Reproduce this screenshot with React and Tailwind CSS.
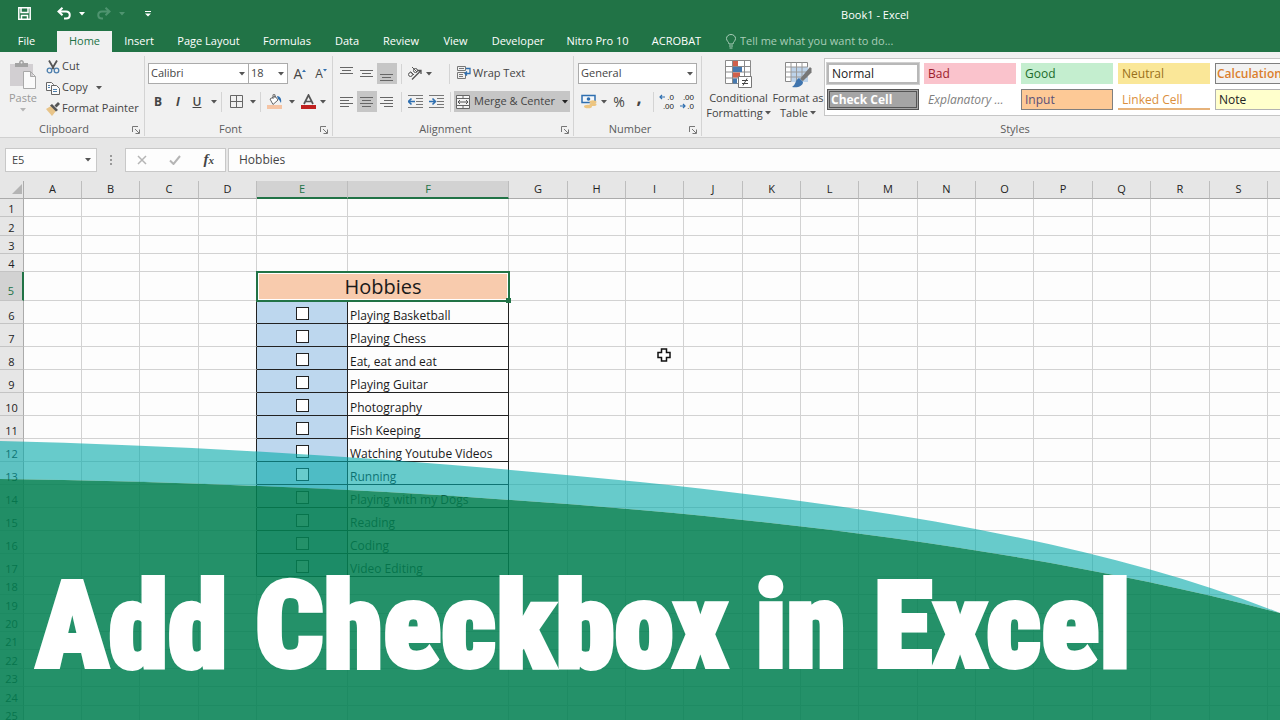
import React from 'react';

const tabs = [
  ['File', 'w-[57px] pr-1'],
  ['Home', 'w-[55px] bg-[#f1f1f1] text-[#217346]'],
  ['Insert', 'w-[54px]'],
  ['Page Layout', 'w-[85px]'],
  ['Formulas', 'w-[72px]'],
  ['Data', 'w-12'],
  ['Review', 'w-[60px]'],
  ['View', 'w-[49px]'],
  ['Developer', 'w-[76px]'],
  ['Nitro Pro 10', 'w-[83px]'],
  ['ACROBAT', 'w-[75px]'],
];

const columns = [
  ['A', 'w-[58px]'], ['B', 'w-[58px]'], ['C', 'w-[59px]'], ['D', 'w-[58px]'],
  ['E', 'w-[91px]'], ['F', 'w-[161px]'], ['G', 'w-[59px]'], ['H', 'w-[58px]'],
  ['I', 'w-[58px]'], ['J', 'w-[59px]'], ['K', 'w-[58px]'], ['L', 'w-[58px]'],
  ['M', 'w-[59px]'], ['N', 'w-[58px]'], ['O', 'w-[58px]'], ['P', 'w-[59px]'],
  ['Q', 'w-[58px]'], ['R', 'w-[59px]'], ['S', 'w-[58px]'], ['', ''],
];

const hobbies = [
  'Playing Basketball', 'Playing Chess', 'Eat, eat and eat', 'Playing Guitar',
  'Photography', 'Fish Keeping', 'Watching Youtube Videos', 'Running',
  'Playing with my Dogs', 'Reading', 'Coding', 'Video Editing',
];

function rowHeight(n) {
  if (n === 5) return 'h-[29px]';
  if (n >= 6 && n <= 17) return 'h-[23px]';
  if (n === 2 || n === 19 || n === 22 || n === 24) return 'h-[19px]';
  return 'h-[18px]';
}

function Caret({ className = 'text-[#555]' }) {
  return (
    <svg aria-hidden="true" viewBox="0 0 6 4" className={'h-1 w-1.5 shrink-0 ' + className}>
      <path d="M0 0h6L3 3.5z" fill="currentColor" />
    </svg>
  );
}

function Sep() {
  return <span className="h-5 w-px shrink-0 bg-[#d4d4d4]" />;
}

function IconButton({ label, className = '', children }) {
  return (
    <button type="button" aria-label={label} className={'flex h-[21px] shrink-0 items-center justify-center ' + className}>
      {children}
    </button>
  );
}

function Group({ label, className = '', children }) {
  return (
    <section aria-label={label} className={'relative flex shrink-0 flex-col border-r border-[#d4d4d4] ' + className}>
      <div className="h-[66px]">{children}</div>
      <div className="flex h-3.5 items-center justify-center pr-4 text-[11px] leading-[14px] text-[#5c5c5c]">{label}</div>
      <button type="button" aria-label={label + ' settings'} className="absolute right-1 bottom-0.5">
        <svg viewBox="0 0 8 8" className="size-2" fill="none" stroke="#777">
          <path d="M.5 6V.5H6M3 3l4 4M7.500 3.500v4h-4" />
        </svg>
      </button>
    </section>
  );
}

function Combo({ label, value, className }) {
  return (
    <label className={'relative flex h-[21px] shrink-0 items-center ' + className}>
      <select aria-label={label} className="h-full w-full appearance-none border border-[#ababab] bg-white pl-0.5 text-[11px] text-[#444]">
        <option>{value}</option>
      </select>
      <span className="pointer-events-none absolute right-1"><Caret /></span>
    </label>
  );
}

function Lines({ rows }) {
  return (
    <svg aria-hidden="true" viewBox="0 0 14 14" className="size-3.5" stroke="#666">
      {rows.map(([x1, x2, y]) => <path key={y} d={`M${x1} ${y}.5H${x2}`} />)}
    </svg>
  );
}

function ClipboardGroup() {
  return (
    <Group label="Clipboard" className="w-[145px]">
      <div className="flex">
        <button type="button" className="flex w-[46px] shrink-0 flex-col items-center text-[11px] leading-4 text-[#999]">
          <svg viewBox="0 0 26 30" className="mt-1 h-[30px] w-[26px]">
            <path d="M0 4h23v22H0z" fill="#d2cfd2" />
            <path d="M5 7V3h4c0-4 5-4 5 0h4v4z" fill="#a3a3a3" /><circle cx="11.500" cy="2.500" r="1" fill="#eee" />
            <path d="M13.500 11.500h7l5 5v12h-12zM20.500 11.500v5h5" fill="#fafafa" stroke="#a9a9a9" />
          </svg>
          Paste
          <span className="mt-0.5 flex"><Caret className="text-[#b5b5b5]" /></span>
        </button>
        <div className="flex flex-col text-[11px] text-[#444]">
          <button type="button" className="flex h-[21px] items-center gap-0.5">
            <svg viewBox="0 0 14 14" className="h-3.5 w-3.5" fill="none">
              <path d="M3 .5l5 8.500M11 .5L6 9" stroke="#555" strokeWidth="1.800" />
              <circle cx="3.500" cy="10.500" r="2.300" stroke="#4d7fae" strokeWidth="1.300" />
              <circle cx="10.500" cy="10.500" r="2.300" stroke="#4d7fae" strokeWidth="1.300" />
            </svg>
            Cut
          </button>
          <button type="button" className="flex h-[21px] items-center gap-0.5">
            <svg viewBox="0 0 14 14" className="h-3.5 w-3.5" fill="#fafafa" stroke="#666">
              <path d="M.5 1.500h5l2 2v6h-7z" /><path d="M5.500 4.500h5l3 3v6h-8z" />
              <path d="M2 4.500h2M2 6.500h2M7 8.500h4M7 10.500h4" stroke="#4d7fae" />
            </svg>
            Copy
            <span className="ml-1.5"><Caret /></span>
          </button>
          <button type="button" className="flex h-[21px] items-center gap-0.5 whitespace-nowrap">
            <svg viewBox="0 0 14 14" className="h-3.5 w-3.5">
              <path d="M0 7l5-3 5 5-4 5z" fill="#e8c489" /><path d="M4 3.500L6 2l6 6-2 1.500z" fill="#555" /><path d="M8.500 3.500L12 0l2 2-3.500 3.500z" fill="#555" />
            </svg>
            Format Painter
          </button>
        </div>
      </div>
    </Group>
  );
}

function FontGroup() {
  return (
    <Group label="Font" className="w-[188px] px-[3px]">
      <div className="flex items-center pt-[7px]">
        <Combo label="Font" value="Calibri" className="w-[101px]" />
        <Combo label="Font size" value="18" className="-ml-px w-10" />
        <IconButton label="Increase font size" className="w-6 text-[14px] text-[#444]">
          A<svg viewBox="0 0 4 10" className="h-3 w-1"><path d="M0 3l2-2.500L4 3z" fill="#2f6fb0" /></svg>
        </IconButton>
        <IconButton label="Decrease font size" className="w-[18px] text-[12px] text-[#444]">
          A<svg viewBox="0 0 4 10" className="h-3 w-1"><path d="M0 0h4L2 2.500z" fill="#2f6fb0" /></svg>
        </IconButton>
      </div>
      <div className="flex items-center pt-[7px] text-[12px] text-[#444]">
        <IconButton label="Bold" className="w-5 font-bold">B</IconButton>
        <IconButton label="Italic" className="w-5 font-bold italic">I</IconButton>
        <IconButton label="Underline" className="w-[18px] font-semibold underline">U</IconButton>
        <IconButton label="Underline style" className="w-[15px]"><Caret /></IconButton>
        <Sep />
        <IconButton label="Borders" className="w-7">
          <svg viewBox="0 0 13 13" className="size-[13px]" fill="none" stroke="#666"><path d="M.5.5h12v12H.5zM6.500.5v12M.5 6.500h12" /></svg>
        </IconButton>
        <IconButton label="Border style" className="w-2.5 pr-1"><Caret /></IconButton>
        <Sep />
        <IconButton label="Fill color" className="w-[26px]">
          <svg viewBox="0 0 15 15" className="size-[15px]">
            <path d="M0 11h15v4H0z" fill="#f5c4a4" />
            <path d="M3 5l5-3 3 4-5 4.500z" fill="#fff" stroke="#666" /><path d="M6 5V1c0-1 2-1 2 0v3" fill="none" stroke="#666" />
            <path d="M10 2c3 0 5 3 4 7-1-1-1-3-3-4z" fill="#2f6fb0" />
          </svg>
        </IconButton>
        <IconButton label="Fill color palette" className="w-2.5"><Caret /></IconButton>
        <IconButton label="Font color" className="w-[22px] flex-col">
          <svg viewBox="0 0 15 15" className="size-[15px]">
            <path d="M3 10L7.500 1 12 10M4.500 7.500h6" fill="none" stroke="#555" strokeWidth="1.700" /><path d="M0 11h15v4H0z" fill="#c0211f" />
          </svg>
        </IconButton>
        <IconButton label="Font color palette" className="w-2"><Caret /></IconButton>
      </div>
    </Group>
  );
}

function Indent({ right }) {
  return (
    <svg aria-hidden="true" viewBox="0 0 15 13" className="h-[13px] w-[15px]" fill="none">
      <path d="M0 .5h15M8 3.500h7M8 6.500h7M8 9.500h7M0 12.500h15" stroke="#777" />
      <path d={right ? 'M0 6.500h6M3.500 3.500l3 3-3 3' : 'M7 6.500H1M3.500 3.500l-3 3 3 3'} stroke="#2f6fb0" strokeWidth="1.600" />
    </svg>
  );
}

function AlignmentGroup() {
  return (
    <Group label="Alignment" className="w-[241px] pr-[3px] pl-1">
      <div className="flex items-center pt-[7px] text-[11px] text-[#444]">
        <IconButton label="Top align" className="w-5"><Lines rows={[[0, 13, 0], [2, 11, 3], [0, 13, 6]]} /></IconButton>
        <IconButton label="Middle align" className="w-5"><Lines rows={[[0, 13, 3], [2, 11, 6], [0, 13, 9]]} /></IconButton>
        <IconButton label="Bottom align" className="w-5 bg-[#c6c6c6]"><Lines rows={[[0, 13, 7], [2, 11, 10], [0, 13, 13]]} /></IconButton>
        <span className="flex w-2 justify-center"><Sep /></span>
        <IconButton label="Orientation" className="w-[29px] gap-1">
          <svg viewBox="0 0 15 15" className="size-[15px]" fill="none" stroke="#555">
            <path d="M5 13.500L14 4.500M10.500 4.500H14V8" strokeWidth="1.300" />
            <circle cx="3.500" cy="8.500" r="2" /><path d="M3.500 5.500l3.500 3.500M5 1l5 5" /><circle cx="8.500" cy="4.500" r="2" />
          </svg>
          <Caret />
        </IconButton>
        <span className="flex w-[23px] justify-center pl-2"><Sep /></span>
        <button type="button" className="flex h-[21px] items-center gap-0.5 whitespace-nowrap">
          <svg viewBox="0 0 14 15" className="h-[15px] w-3.5" fill="none" stroke="#777">
            <path d="M.5.5h8v4h-8zM.5 6.500h8v6h-8zM2 2.500h5M2 8.500h4M2 10.500h4" />
            <path d="M9 2.500h4v5H8M10 5.500l-2 2 2 2" stroke="#2f6fb0" strokeWidth="1.300" />
          </svg>
          Wrap Text
        </button>
      </div>
      <div className="flex items-center pt-[7px] text-[11px] text-[#444]">
        <IconButton label="Align left" className="w-5"><Lines rows={[[0, 13, 2], [0, 9, 5], [0, 13, 8], [0, 9, 11]]} /></IconButton>
        <IconButton label="Center" className="w-5 bg-[#c6c6c6]"><Lines rows={[[0, 13, 2], [2, 11, 5], [0, 13, 8], [2, 11, 11]]} /></IconButton>
        <IconButton label="Align right" className="w-5"><Lines rows={[[0, 13, 2], [4, 13, 5], [0, 13, 8], [4, 13, 11]]} /></IconButton>
        <span className="flex w-2 justify-center"><Sep /></span>
        <IconButton label="Decrease indent" className="w-[21px]"><Indent /></IconButton>
        <IconButton label="Increase indent" className="w-5"><Indent right /></IconButton>
        <span className="flex w-2 justify-center"><Sep /></span>
        <button type="button" className="flex h-[21px] flex-1 items-center gap-1 bg-[#c6c6c6] px-0.5 whitespace-nowrap">
          <svg viewBox="0 0 14 14" className="h-3.5 w-3.5 shrink-0" fill="#f5f5f5" stroke="#666">
            <path d="M.5.5h13v13H.5zM.5 3.500h13M.5 10.500h13M7 .5v3M7 10.500v3" /><path d="M2 7h10M4 5L2 7l2 2M10 5l2 2-2 2" fill="none" stroke="#555" />
          </svg>
          <span className="flex-1 text-left">Merge &amp; Center</span>
          <Caret className="text-[#222]" />
        </button>
      </div>
    </Group>
  );
}

function Decimals({ top, bottom, left }) {
  return (
    <svg aria-hidden="true" viewBox="0 0 16 19" className="h-[19px] w-4 overflow-visible font-['Liberation_Sans',sans-serif] text-[8px]">
      <text x="15" y="8" textAnchor="end" fill="#222">{top}</text>
      <text x="15" y="17" textAnchor="end" fill="#222">{bottom}</text>
      <path d={left ? 'M6 5H1M3 3L1 5l2 2' : 'M1 14h5M4 12l2 2-2 2'} fill="none" stroke="#2f6fb0" strokeWidth="1.200" />
    </svg>
  );
}

function NumberGroup() {
  return (
    <Group label="Number" className="w-32 pr-[3px] pl-1">
      <div className="flex pt-[7px]"><Combo label="Number format" value="General" className="w-[119px]" /></div>
      <div className="flex items-center pt-[7px] text-[#444]">
        <IconButton label="Accounting format" className="w-[31px] gap-1">
          <svg viewBox="0 0 16 15" className="h-[15px] w-4" fill="none">
            <path d="M1 1.500h13v7H1z" fill="#f4f7fa" stroke="#2f6fb0" strokeWidth="1.500" /><circle cx="7.500" cy="5" r="1.800" fill="#2f6fb0" />
            <ellipse cx="12" cy="8" rx="3.500" ry="1.800" fill="#edc580" /><ellipse cx="12" cy="10.500" rx="3.500" ry="1.500" fill="#edc580" /><ellipse cx="7" cy="12.500" rx="4" ry="1.800" fill="#edc580" />
          </svg>
          <Caret />
        </IconButton>
        <IconButton label="Percent style" className="w-5 text-[14px]">%</IconButton>
        <IconButton label="Comma style" className="w-5 pb-2 text-[18px] font-bold">,</IconButton>
        <span className="flex w-2 justify-center"><Sep /></span>
        <IconButton label="Increase decimal" className="w-5"><Decimals top=".0" bottom=".00" left /></IconButton>
        <IconButton label="Decrease decimal" className="w-5"><Decimals top=".00" bottom=".0" /></IconButton>
      </div>
    </Group>
  );
}

const cellStyles = [
  ['Normal', 'border-2 border-[#b8b8b8] bg-white text-[#222] outline-1 outline-[#d0d0d0] px-[3px]'],
  ['Bad', 'bg-[#fac3cc] text-[#9c1b2c] px-1'],
  ['Good', 'bg-[#c4eecf] text-[#1d6b2a] px-1'],
  ['Neutral', 'bg-[#fae798] text-[#99701a] px-1'],
  ['Calculation', 'border border-[#7f7f7f] bg-[#f2f2f2] font-semibold text-[#db7f2d] px-px'],
  ['Check Cell', 'border-[3px] border-double border-[#555] bg-[#a5a5a5] font-bold text-white px-px'],
  ['Explanatory ...', 'text-[#7f7f7f] italic px-1'],
  ['Input', 'border border-[#7f7f7f] bg-[#fdc996] text-[#5a5078] px-[3px]'],
  ['Linked Cell', 'border-b-2 border-[#e6b27a] pt-0.5 text-[#db8f3d] px-1'],
  ['Note', 'border border-[#b2b2b2] bg-[#ffffcc] text-[#222] px-[3px]'],
];

function StylesGroup() {
  return (
    <section aria-label="Styles" className="flex min-w-0 flex-1 flex-col">
      <div className="flex h-[66px]">
        <button type="button" className="flex w-[73px] shrink-0 flex-col items-center text-[11px] leading-[15px] text-[#444]">
          <svg viewBox="0 0 28 28" className="mt-1 mb-0.5 size-7" fill="none">
            <path d="M.5.5h25v23H.5zM.5 6.500h25M.5 12h25M.5 18h25M7.500.5v23M19.500.5v23" fill="#fff" stroke="#8a8a8a" />
            <path d="M8 1h5v5H8zM8 12.500h7v5H8z" fill="#d0604b" /><path d="M8 7h9v5H8zM8 18.500h4v5H8z" fill="#4779ae" />
            <path d="M13.500 16.500h13v11h-13z" fill="#fff" stroke="#777" /><path d="M17 20.500h6M17 23.500h6M22 18.500l-4 7" stroke="#444" />
          </svg>
          <span>Conditional</span>
          <span className="flex items-center gap-0.5">Formatting <Caret /></span>
        </button>
        <button type="button" className="flex w-[46px] shrink-0 flex-col items-center text-[11px] leading-[15px] whitespace-nowrap text-[#444]">
          <svg viewBox="0 0 28 28" className="mt-1 mb-0.5 size-7" fill="none">
            <path d="M1.500 2.500h22v19h-22z" fill="#fff" stroke="#888" /><path d="M7 7h17v15H7z" fill="#bdd3ea" />
            <path d="M1.500 7h22M1.500 12h22M1.500 17h22M7 2.500v19M12.500 2.500v19M18 2.500v19" stroke="#9a9a9a" />
            <path d="M26 7l1.500 1.500v4L19 21l-3-2z" fill="#777" /><path d="M15 18l4 4c0 4-5 6-11 5 4-2 3-7 7-9z" fill="#3f74ad" />
          </svg>
          <span>Format as</span>
          <span className="flex items-center gap-0.5">Table <Caret /></span>
        </button>
        <div className="mt-0.5 ml-[3px] h-[58px] min-w-0 flex-1 overflow-hidden border border-r-0 border-[#c6c6c6] bg-white pt-1 pl-0.5">
          <div className="grid w-[480px] grid-cols-5 gap-[5px] text-[12px]">
            {cellStyles.map(([name, look]) => (
              <button type="button" key={name} className={'flex h-[21px] items-center text-left leading-none whitespace-nowrap ' + look}>{name}</button>
            ))}
          </div>
        </div>
      </div>
      <div className="flex h-3.5 items-center justify-center pl-12 text-[11px] leading-[14px] text-[#5c5c5c]">Styles</div>
    </section>
  );
}

function TitleBar() {
  return (
    <div className="grid h-[31px] grid-cols-[470px_1fr] items-center text-[11px] text-white">
      <div className="flex h-full items-center pb-1 pl-[18px]">
        <button type="button" aria-label="Save">
          <svg viewBox="0 0 13 13" className="size-[13px]" fill="none" stroke="#fff" strokeWidth="1.500"><path d="M.8.8h11.400v11.400H.8zM3 1v4.500h7V1M3.500 12V8.500h6V12" /></svg>
        </button>
        <button type="button" aria-label="Undo" className="ml-[26px] flex items-center gap-2">
          <svg viewBox="0 0 14 13" className="h-[13px] w-3.5" fill="none" stroke="#fff" strokeWidth="2"><path d="M1.500 4.500H9c5 0 5 7 0 7H7M5.500.8L1.500 4.500l4 3.700" /></svg>
          <Caret className="text-white" />
        </button>
        <button type="button" aria-label="Redo" className="ml-3 flex items-center gap-2">
          <svg viewBox="0 0 14 13" className="h-[13px] w-3.5" fill="none" stroke="#4f9470" strokeWidth="2"><path d="M12.500 4.500H5c-5 0-5 7 0 7h1M8.500.8l4 3.700-4 3.700" /></svg>
          <Caret className="text-[#4f9470]" />
        </button>
        <button type="button" aria-label="Customize toolbar" className="ml-5">
          <svg viewBox="0 0 6 6" className="size-1.5" fill="#fff"><path d="M0 0h6v1H0zM0 2.500h6L3 5.500z" /></svg>
        </button>
      </div>
      <div className="text-center">Book1 - Excel</div>
    </div>
  );
}

function Ribbon() {
  return (
    <header className="shrink-0 bg-[#217346]">
      <TitleBar />
      <div className="flex h-[21px] text-[11px] text-white">
        <nav className="flex shrink-0">
          {tabs.map(([name, look]) => (
            <button type="button" key={name} className={'flex h-full items-center justify-center whitespace-nowrap ' + look}>{name}</button>
          ))}
        </nav>
        <label className="ml-3 flex items-center gap-1">
          <svg viewBox="0 0 10 15" className="h-[15px] w-2.5" fill="none" stroke="#a9cdb8"><path d="M3 10c0-2-2.500-3-2.500-5.500a4.500 4 0 019 0C9.500 7 7 8 7 10zM3 12h4M3.500 14h3" /></svg>
          <input aria-label="Tell me what you want to do" placeholder="Tell me what you want to do..." className="w-44 bg-transparent placeholder:text-[#a9cdb8]" />
        </label>
      </div>
      <div className="flex h-[86px] border-b border-[#d0d0d0] bg-[#f1f1f1] pt-1 pb-px">
        <ClipboardGroup />
        <FontGroup />
        <AlignmentGroup />
        <NumberGroup />
        <StylesGroup />
      </div>
    </header>
  );
}

function FormulaBar() {
  return (
    <div className="flex h-[43px] shrink-0 items-center bg-[#e6e6e6] pl-[5px] text-[12px] text-[#444]">
      <label className="relative flex h-6 w-[92px] items-center">
        <input aria-label="Name box" defaultValue="E5" className="h-full w-full border border-[#c8c8c8] bg-[#fdfdfd] px-1.5 text-[11px]" />
        <span className="pointer-events-none absolute right-1.5"><Caret /></span>
      </label>
      <svg aria-hidden="true" viewBox="0 0 28 10" className="h-2.5 w-7" fill="#999"><path d="M13 0h2v2h-2zM13 4h2v2h-2zM13 8h2v2h-2z" /></svg>
      <div className="flex h-6 w-[101px] items-center justify-around border border-[#c8c8c8] bg-[#fdfdfd]">
        <button type="button" aria-label="Cancel"><svg viewBox="0 0 10 10" className="size-2.5" stroke="#b5b5b5" strokeWidth="1.500"><path d="M1 1l8 8M9 1L1 9" /></svg></button>
        <button type="button" aria-label="Enter"><svg viewBox="0 0 12 10" className="h-2.5 w-3" fill="none" stroke="#b5b5b5" strokeWidth="2"><path d="M1 5.500L4.500 9 11 1" /></svg></button>
        <button type="button" aria-label="Insert function" className="font-['Liberation_Serif',serif] text-[15px] leading-none font-bold italic">f<span className="text-[11px]">x</span></button>
      </div>
      <input aria-label="Formula" defaultValue="Hobbies" className="ml-0.5 h-6 min-w-0 flex-1 border border-r-0 border-[#c8c8c8] bg-[#fdfdfd] px-2.5" />
    </div>
  );
}

function Cells({ row }) {
  return columns.map(([col], i) => {
    const inTable = row >= 5 && row <= 17;
    if (row === 5 && col === 'F') return null;
    if (row === 5 && col === 'E') {
      return (
        <td key={i} colSpan={2} className="relative bg-[#f8cbad] p-0 pt-px text-center text-[20px] leading-7 text-[#1a1a1a]">
          <div className="pointer-events-none absolute -inset-px border-2 border-[#217346] inset-ring inset-ring-white" />
          Hobbies
          <span className="absolute -right-0.5 -bottom-0.5 z-10 size-[5px] bg-[#217346]" />
        </td>
      );
    }
    if (inTable && col === 'E') {
      return (
        <td key={i} className="border-r border-b border-[#222] bg-[#bdd7ee] p-0 text-center align-top">
          <input type="checkbox" aria-label={hobbies[row - 6]} className="mx-auto mt-1.5 block size-[13px] appearance-none border border-[#222] bg-white" />
        </td>
      );
    }
    if (inTable && col === 'F') {
      return <td key={i} className="border-r border-b border-[#222] p-0 pl-0.5 align-bottom text-[12px] leading-[14px] whitespace-nowrap text-[#1a1a1a]">{hobbies[row - 6]}</td>;
    }
    const right = inTable && col === 'D' ? 'border-r-[#222] ' : 'border-r-[#d2d2d2] ';
    return <td key={i} className={'border-b border-b-[#d2d2d2] p-0 ' + right + (col ? 'border-r' : '')} />;
  });
}

function Sheet() {
  return (
    <main className="relative min-h-0 flex-1 overflow-hidden bg-[#fdfdfd]">
      <table className="w-full table-fixed border-separate border-spacing-0 text-[11px] text-[#222]">
        <colgroup>
          <col className="w-6" />
          {columns.map(([, w], i) => <col key={i} className={w} />)}
        </colgroup>
        <thead>
          <tr className="h-[18px] bg-[#e6e6e6]">
            <th className="border-r border-b border-[#ababab] p-0">
              <svg aria-hidden="true" viewBox="0 0 11 11" className="ml-auto size-[11px]"><path d="M10 0v10H0z" fill="#b4b4b4" /></svg>
            </th>
            {columns.map(([name], i) => (
              <th key={i} scope="col" className={'border-r-[#bdbdbd] p-0 align-top leading-4 font-normal ' + (name ? 'border-r ' : '') + (name === 'E' || name === 'F' ? 'border-b-2 border-b-[#217346] bg-[#d2d2d2] text-[#217346]' : 'border-b border-b-[#ababab]')}>{name}</th>
            ))}
          </tr>
        </thead>
        <tbody>
          {Array.from({ length: 25 }, (_, k) => k + 1).map((row) => (
            <tr key={row} className={rowHeight(row)}>
              <th scope="row" className={'border-b border-b-[#c4c4c4] p-0 align-bottom leading-[14px] font-normal ' + (row === 5 ? 'border-r-2 border-r-[#217346] bg-[#d2d2d2] pb-0.5 text-[#217346]' : 'border-r border-r-[#ababab] bg-[#e6e6e6]')}>{row}</th>
              <Cells row={row} />
            </tr>
          ))}
        </tbody>
      </table>
      <svg aria-hidden="true" viewBox="0 0 14 14" className="absolute top-[167px] left-[657px] size-3.5">
        <path d="M4.500 1h5v3.500H13v5H9.500V13h-5V9.500H1v-5h3.500z" fill="#fff" stroke="#111" strokeWidth="1.500" />
      </svg>
    </main>
  );
}

function Banner() {
  return (
    <div className="pointer-events-none absolute inset-x-0 bottom-0 h-[279px]">
      <svg aria-hidden="true" viewBox="0 441 1280 279" preserveAspectRatio="none" className="absolute inset-0 size-full">
        <path d="M0 441C215 446 430 461 640 482C868 506 1095 540 1280 613C1090 563 870 530 640 510C430 492 215 482 0 479Z" fill="#03aaaa" fillOpacity="0.6" />
        <path d="M0 479C215 482 430 492 640 510C870 530 1090 563 1280 613V720H0Z" fill="#038153" fillOpacity="0.87" />
      </svg>
      <h1 className="relative pt-[120px] pl-9 font-['Roboto_Condensed',Roboto,sans-serif] text-[120px] leading-[130px] font-black whitespace-nowrap text-white [-webkit-text-stroke:4px_white]">Add Checkbox in Excel</h1>
    </div>
  );
}

export default function App() {
  return (
    <div className="relative flex h-screen w-full flex-col overflow-hidden bg-[#e6e6e6] font-['Open_Sans','Noto_Sans',sans-serif]">
      <Ribbon />
      <FormulaBar />
      <Sheet />
      <Banner />
    </div>
  );
}
